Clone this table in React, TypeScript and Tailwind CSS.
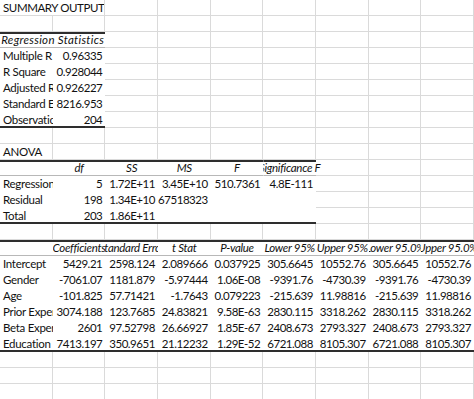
import React from 'react';

// line styles drawn with inset shadows so the 16px rows keep their height
const GRID = 'shadow-[inset_-1px_-1px_0_#dadada]';
const GRID_BOTTOM = 'shadow-[inset_0_-1px_0_#dadada]';
const HEAD = 'shadow-[inset_0_2px_0_#2e2e2e,inset_0_-1px_0_#b8b8b8]';
const LAST = 'shadow-[inset_0_-2px_0_#2e2e2e]';

type Role = 'head' | 'body' | 'last';

type TableRow = { role: Role; cells: string[] };

const regStats: TableRow[] = [
  { role: 'body', cells: ['Multiple R', '0.96335'] },
  { role: 'body', cells: ['R Square', '0.928044'] },
  { role: 'body', cells: ['Adjusted R Square', '0.926227'] },
  { role: 'body', cells: ['Standard Error', '8216.953'] },
  { role: 'last', cells: ['Observations', '204'] },
];

const anova: TableRow[] = [
  { role: 'head', cells: ['', 'df', 'SS', 'MS', 'F', 'Significance F'] },
  { role: 'body', cells: ['Regression', '5', '1.72E+11', '3.45E+10', '510.7361', '4.8E-111'] },
  { role: 'body', cells: ['Residual', '198', '1.34E+10', '67518323', '', ''] },
  { role: 'last', cells: ['Total', '203', '1.86E+11', '', '', ''] },
];

const coef: TableRow[] = [
  {
    role: 'head',
    cells: ['', 'Coefficients', 'Standard Error', 't Stat', 'P-value', 'Lower 95%', 'Upper 95%', 'Lower 95.0%', 'Upper 95.0%'],
  },
  { role: 'body', cells: ['Intercept', '5429.21', '2598.124', '2.089666', '0.037925', '305.6645', '10552.76', '305.6645', '10552.76'] },
  { role: 'body', cells: ['Gender', '-7061.07', '1181.879', '-5.97444', '1.06E-08', '-9391.76', '-4730.39', '-9391.76', '-4730.39'] },
  { role: 'body', cells: ['Age', '-101.825', '57.71421', '-1.7643', '0.079223', '-215.639', '11.98816', '-215.639', '11.98816'] },
  { role: 'body', cells: ['Prior Experience', '3074.188', '123.7685', '24.83821', '9.58E-63', '2830.115', '3318.262', '2830.115', '3318.262'] },
  { role: 'body', cells: ['Beta Experience', '2601', '97.52798', '26.66927', '1.85E-67', '2408.673', '2793.327', '2408.673', '2793.327'] },
  { role: 'last', cells: ['Education', '7413.197', '350.9651', '21.12232', '1.29E-52', '6721.088', '8105.307', '6721.088', '8105.307'] },
];

function EmptyCells({ count }: { count: number }) {
  return (
    <>
      {Array.from({ length: count }).map((_, i) => (
        <div key={i} className={`h-4 ${GRID}`} />
      ))}
    </>
  );
}

function TableCell({ role, text, col, openRight }: { role: Role; text: string; col: number; openRight?: boolean }) {
  if (role === 'head') {
    return (
      <div
        className={`h-4 flex justify-center italic tracking-[-0.3px] ${HEAD} ${
          openRight ? '[clip-path:inset(0_-40px_0_0)]' : 'overflow-hidden'
        }`}
      >
        <span className="shrink-0 whitespace-nowrap">{text}</span>
      </div>
    );
  }
  const line = role === 'last' ? LAST : '';
  return (
    <div
      className={`h-4 overflow-hidden whitespace-nowrap ${line} ${
        col === 0 ? 'text-left pl-[3px] tracking-[-0.3px]' : 'text-right pr-[3px] tracking-[-0.45px]'
      }`}
    >
      {text}
    </div>
  );
}

function Table({ rows, width, openLast }: { rows: TableRow[]; width: number; openLast?: boolean }) {
  return (
    <>
      {rows.map((r, ri) => (
        <React.Fragment key={ri}>
          {r.cells.map((t, ci) => (
            <TableCell
              key={ci}
              role={r.role}
              text={t}
              col={ci}
              openRight={openLast && ci === r.cells.length - 1}
            />
          ))}
          <EmptyCells count={9 - width} />
        </React.Fragment>
      ))}
    </>
  );
}

export default function App() {
  return (
    <div className="w-[474px] h-[399px] overflow-hidden bg-white text-[#111] font-['Lato',sans-serif] text-[11.5px] leading-4">
      <div className="grid grid-cols-9 w-[474px]">
        {/* Row 1: title runs over column B */}
        <div className={`h-4 pl-[3px] whitespace-nowrap tracking-[-0.4px] ${GRID_BOTTOM}`}>SUMMARY OUTPUT</div>
        <EmptyCells count={8} />

        <EmptyCells count={9} />

        {/* Regression Statistics */}
        <div className={`col-span-2 h-4 flex justify-center italic tracking-[0.3px] ${HEAD}`}>
          <span className="whitespace-nowrap">Regression Statistics</span>
        </div>
        <EmptyCells count={7} />
        <Table rows={regStats} width={2} />

        <EmptyCells count={9} />

        {/* ANOVA */}
        <div className={`h-4 pl-[3px] whitespace-nowrap tracking-[-0.3px] ${GRID}`}>ANOVA</div>
        <EmptyCells count={8} />
        <Table rows={anova} width={6} openLast />

        <EmptyCells count={9} />

        {/* Coefficients */}
        <Table rows={coef} width={9} />

        <EmptyCells count={27} />
      </div>
    </div>
  );
}
